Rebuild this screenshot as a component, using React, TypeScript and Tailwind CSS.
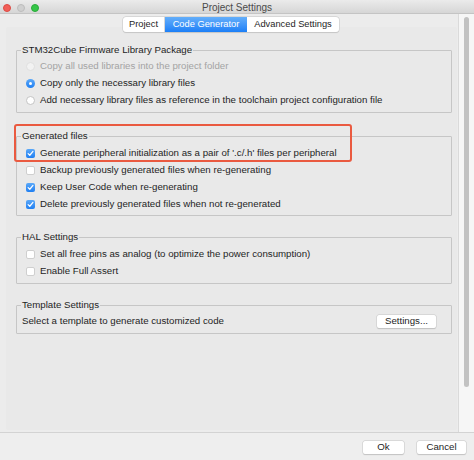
import React from "react";

const FONT = { fontFamily: '"Liberation Sans", Arial, sans-serif' };

function Radio({ checked, disabled }: { checked?: boolean; disabled?: boolean }) {
  if (checked) {
    return (
      <span className="flex h-[9px] w-[9px] shrink-0 items-center justify-center rounded-full bg-gradient-to-b from-[#5aa8f8] to-[#1d7ff2]">
        <span className="h-[3px] w-[3px] rounded-full bg-white" />
      </span>
    );
  }
  return (
    <span
      className={`h-[9px] w-[9px] shrink-0 rounded-full border ${
        disabled ? "border-[#e0e0e0] bg-[#f2f2f2]" : "border-[#c4c4c4] bg-white"
      }`}
    />
  );
}

function Check({ checked }: { checked?: boolean }) {
  if (checked) {
    return (
      <span className="flex h-[9px] w-[9px] shrink-0 items-center justify-center rounded-[2px] bg-gradient-to-b from-[#5aa8f8] to-[#1d7ff2]">
        <svg width="7" height="7" viewBox="0 0 8 8" fill="none">
          <path d="M1.3 4.2 L3.2 6 L6.8 1.6" stroke="white" strokeWidth="1.4" strokeLinecap="round" strokeLinejoin="round" />
        </svg>
      </span>
    );
  }
  return <span className="h-[9px] w-[9px] shrink-0 rounded-[2px] border border-[#cfcfcf] bg-white" />;
}

function Row({ children, control, muted }: { children: React.ReactNode; control: React.ReactNode; muted?: boolean }) {
  return (
    <div className={`flex h-[17px] items-center gap-[5px] pl-[9px] ${muted ? "text-[#a3a3a3]" : "text-[#1e1e1e]"}`}>
      {control}
      <span>{children}</span>
    </div>
  );
}

function Group({ title, children, className = "" }: { title: string; children: React.ReactNode; className?: string }) {
  return (
    <fieldset className={`relative rounded-[1px] border border-[#c6c6c6] ${className}`}>
      <legend className="ml-[4px] px-[1px] leading-[12px] text-[#1e1e1e]">{title}</legend>
      {children}
    </fieldset>
  );
}

function MacButton({ children, className = "" }: { children: React.ReactNode; className?: string }) {
  return (
    <button className={`flex h-[13px] items-center justify-center rounded-[2px] bg-white text-[#1e1e1e] shadow-[0_0_0_0.5px_#c9c9c9,0_0.5px_1px_rgba(0,0,0,0.2)] ${className}`}>
      {children}
    </button>
  );
}

export default function App() {
  return (
    <div className="flex h-[460px] w-[474px] flex-col overflow-hidden bg-[#ececec] text-[9.7px]" style={FONT}>
      {/* Title bar */}
      <div className="grid h-[14px] shrink-0 grid-cols-[1fr_auto_1fr] items-center bg-gradient-to-b from-[#ebebeb] to-[#d6d6d6] border-b border-[#c4c4c4]">
        <div className="flex items-center gap-[6px] pl-[3px]">
          <span className="h-[8px] w-[8px] rounded-full bg-[#f25f58] border border-[#dc4b44]" />
          <span className="h-[8px] w-[8px] rounded-full bg-[#d0d0d0] border border-[#bdbdbd]" />
          <span className="h-[8px] w-[8px] rounded-full bg-[#35c648] border border-[#2aab3a]" />
        </div>
        <div className="text-[10px] text-[#4a4a4a]">Project Settings</div>
        <div />
      </div>

      {/* Body */}
      <div className="flex h-[418px] shrink-0">
        <div className="flex w-[458px] flex-col">
          {/* Tabs */}
          <div className="relative z-10 mt-[3px] flex justify-center pl-[4px] text-[9.3px]">
            <div className="flex h-[15px] items-stretch overflow-hidden rounded-[3px] bg-white shadow-[0_0_0_0.5px_#c6c6c6,0_0.5px_1px_rgba(0,0,0,0.15)]">
              <div className="flex w-[42px] items-center justify-center text-[#1e1e1e] border-r border-[#d6d6d6]">Project</div>
              <div className="flex w-[82px] items-center justify-center bg-gradient-to-b from-[#63aefa] to-[#1a7ff7] text-white">Code Generator</div>
              <div className="flex w-[92px] items-center justify-center text-[#1e1e1e]">Advanced Settings</div>
            </div>
          </div>

          {/* Panel */}
          <div className="-mt-[5px] ml-[6px] mb-[2px] flex w-[451px] flex-1 flex-col rounded-[2px] bg-[#e9e9e9] pl-[10px] pr-[5px] pt-[17px]">
            <Group title="STM32Cube Firmware Library Package" className="pt-[2px] pb-[3px]">
              <Row muted control={<Radio disabled />}>Copy all used libraries into the project folder</Row>
              <Row control={<Radio checked />}>Copy only the necessary library files</Row>
              <Row control={<Radio />}>Add necessary library files as reference in the toolchain project configuration file</Row>
            </Group>

            <Group title="Generated files" className="mt-[17px] pt-[3px] pb-[2px]">
              <div className="pointer-events-none absolute -left-[3px] -top-[18px] h-[38px] w-[338px] rounded-[3px] border-2 border-[#ea5a40]" />
              <Row control={<Check checked />}>Generate peripheral initialization as a pair of '.c/.h' files per peripheral</Row>
              <Row control={<Check />}>Backup previously generated files when re-generating</Row>
              <Row control={<Check checked />}>Keep User Code when re-generating</Row>
              <Row control={<Check checked />}>Delete previously generated files when not re-generated</Row>
            </Group>

            <Group title="HAL Settings" className="mt-[15px] pt-[3px] pb-[3px]">
              <Row control={<Check />}>Set all free pins as analog (to optimize the power consumption)</Row>
              <Row control={<Check />}>Enable Full Assert</Row>
            </Group>

            <Group title="Template Settings" className="mt-[15px] pt-[2px] pb-[3px]">
              <div className="flex h-[17px] items-center justify-between pl-[5px] pr-[15px] text-[#1e1e1e]">
                <span>Select a template to generate customized code</span>
                <MacButton className="w-[59px]">Settings...</MacButton>
              </div>
            </Group>
          </div>
        </div>

        {/* Scrollbar */}
        <div className="flex w-[16px] justify-center border-l border-[#dadada] bg-[#f6f6f6] pt-[3px]">
          <div className="h-[370px] w-[5px] rounded-full bg-[#c2c2c2]" />
        </div>
      </div>

      {/* Bottom bar */}
      <div className="flex flex-1 items-center justify-end gap-[13px] border-t border-[#d3d3d3] bg-[#eeeeee] pr-[8px] pt-[1px]">
        <MacButton className="w-[41px]">Ok</MacButton>
        <MacButton className="w-[49px]">Cancel</MacButton>
      </div>
    </div>
  );
}
